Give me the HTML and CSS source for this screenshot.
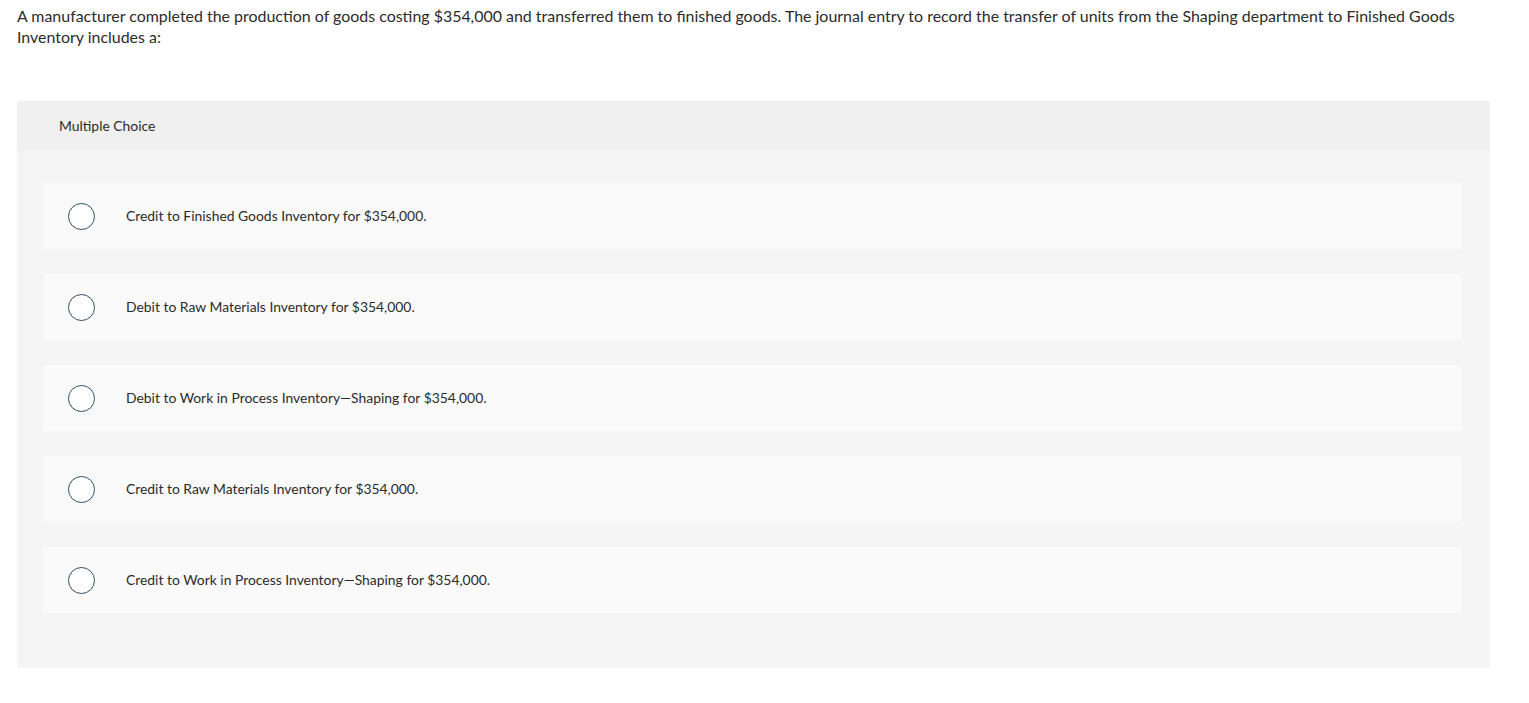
FILE: index.html
```html
<!DOCTYPE html>
<html lang="en">
<head>
<meta charset="utf-8">
<title>Multiple Choice</title>
<link rel="stylesheet" href="styles.css">
</head>
<body>
<div class="page">
  <p class="question">A manufacturer completed the production of goods costing $354,000 and transferred them to finished goods. The journal entry to record the transfer of units from the Shaping department to Finished Goods Inventory includes a:</p>
  <section class="panel">
    <header class="panel-header">Multiple Choice</header>
    <div class="options">
      <label class="option"><span class="radio"></span><span class="option-text">Credit to Finished Goods Inventory for $354,000.</span></label>
      <label class="option"><span class="radio"></span><span class="option-text">Debit to Raw Materials Inventory for $354,000.</span></label>
      <label class="option"><span class="radio"></span><span class="option-text">Debit to Work in Process Inventory—Shaping for $354,000.</span></label>
      <label class="option"><span class="radio"></span><span class="option-text">Credit to Raw Materials Inventory for $354,000.</span></label>
      <label class="option"><span class="radio"></span><span class="option-text">Credit to Work in Process Inventory—Shaping for $354,000.</span></label>
    </div>
  </section>
</div>
</body>
</html>
```

FILE: styles.css
```css
html, body {
  margin: 0;
  padding: 0;
  background: #ffffff;
}

body {
  font-family: "Lato", "Open Sans", sans-serif;
  color: #2b2b2b;
}

.page {
  width: 1473px;
  padding: 0 0 0 17px;
}

.question {
  margin: 0;
  padding-top: 5px;
  font-size: 15.95px;
  line-height: 21px;
  color: #2b2b2b;
}

.panel {
  margin-top: 54px;
  background: #f5f5f5;
  border-radius: 3px;
  overflow: hidden;
}

.panel-header {
  height: 50px;
  display: flex;
  align-items: center;
  padding-left: 42px;
  padding-bottom: 2px;
  box-sizing: border-box;
  background: #f0f0f0;
  font-size: 13.9px;
  color: #2b2b2b;
}

.options {
  display: flex;
  flex-direction: column;
  gap: 25px;
  padding: 32px 28px 55px 26px;
}

.option {
  height: 66px;
  display: flex;
  align-items: center;
  background: #fafafa;
  border-radius: 3px;
}

.radio {
  width: 25px;
  height: 25px;
  margin-left: 25px;
  border: 1.5px solid #2f4a66;
  border-radius: 50%;
  background: #ffffff;
  flex: none;
}

.option-text {
  margin-left: 31px;
  margin-bottom: 2px;
  font-size: 13.9px;
  color: #2b2b2b;
}
```
